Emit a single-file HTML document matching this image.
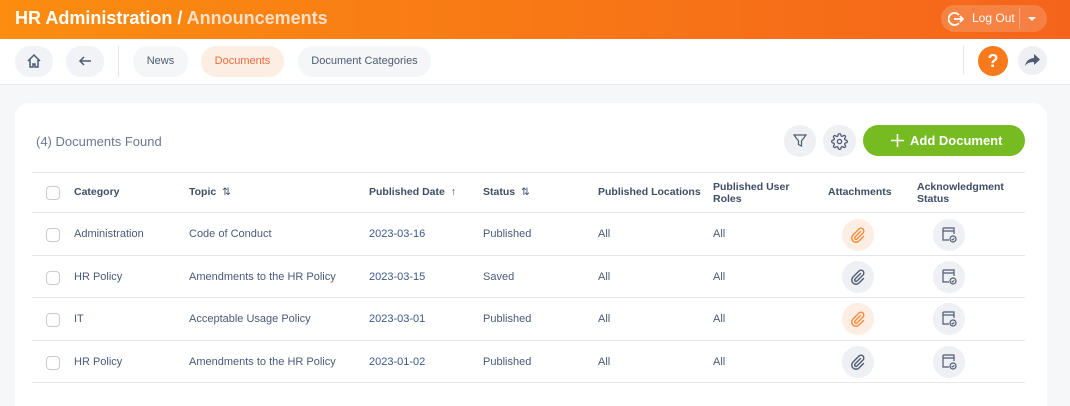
<!DOCTYPE html><html><head><style>
*{box-sizing:border-box;margin:0;padding:0}
html,body{width:1070px;height:406px;overflow:hidden}
body{background:#f6f7f9;font-family:"Liberation Sans",sans-serif;position:relative}
.hdr{position:absolute;left:0;top:0;width:1070px;height:39px;background:linear-gradient(90deg,#fb8d10,#f5641b)}
.hdr h1{position:absolute;left:15px;top:8px;font-size:18px;color:#fff;font-weight:bold}
.hdr h1 span{color:#fde0c8}
.lo{position:absolute;left:941px;top:5px;width:106px;height:27px;border-radius:14px;background:rgba(255,255,255,.18);color:#fff;font-size:12px}
.tb{position:absolute;left:0;top:39px;width:1070px;height:46px;background:#fff;border-bottom:1px solid #e8eaee}
.ib{position:absolute;width:38px;height:31px;border-radius:15px;background:#f1f3f6;top:7px}
.pill{position:absolute;top:7px;height:31px;border-radius:15px;background:#f4f6f8;font-size:11px;color:#4d5b73;line-height:31px;text-align:center}
.card{position:absolute;left:15px;top:103px;width:1032px;height:303px;background:#fff;border-radius:14px 14px 0 0}
.row{position:absolute;left:32px;width:993px;border-top:1px solid #e4e6ea;font-size:11px;color:#4a5a78}
.row div{position:absolute}
.cb{width:14px;height:14px;border:1px solid #c7ccd5;border-radius:4px;left:14px}
.circ{width:32px;height:32px;border-radius:16px;background:#eef0f3}
.th{font-weight:bold;color:#3f4d66;font-size:10.5px}
</style></head><body>
<div class="hdr"><h1>HR Administration / <span>Announcements</span></h1>
<div class="lo"><svg style="position:absolute;left:7px;top:6px" width="16" height="16" viewBox="0 0 16 16" fill="none" stroke="#fff" stroke-width="1.8"><path d="M11 4A6 6 0 1 0 11 12"/><path d="M6 8h9M12 5l3 3-3 3"/></svg><span style="position:absolute;left:31px;top:6px">Log Out</span><div style="position:absolute;left:78px;top:3px;width:1px;height:21px;background:rgba(255,255,255,.3)"></div><div style="position:absolute;left:87px;top:12px;border:4px solid transparent;border-top:4px solid #fff"></div></div></div>
<div class="tb">
<div class="ib" style="left:15px"><svg style="position:absolute;left:11px;top:7px" width="16" height="16" viewBox="0 0 16 16" fill="none" stroke="#4d5b73" stroke-width="1.5"><path d="M2 8L8 2l6 6M4 6.5V14h3v-3h2v3h3V6.5"/></svg></div>
<div class="ib" style="left:66px"><svg style="position:absolute;left:12px;top:8px" width="14" height="14" viewBox="0 0 14 14" fill="none" stroke="#4d5b73" stroke-width="1.5"><path d="M13 7H2M6 3L2 7l4 4"/></svg></div>
<div style="position:absolute;left:118px;top:7px;width:1px;height:31px;background:#e3e5e9"></div>
<div class="pill" style="left:133px;width:55px">News</div>
<div class="pill" style="left:201px;width:83px;background:#fdeee4;color:#f26a3a">Documents</div>
<div class="pill" style="left:298px;width:133px">Document Categories</div>
<div style="position:absolute;left:963px;top:7px;width:1px;height:28px;background:#e3e5e9"></div>
<div style="position:absolute;left:978px;top:7px;width:30px;height:30px;border-radius:15px;background:#f97a1d;color:#fff;font-weight:bold;font-size:18px;text-align:center;line-height:30px">?</div>
<div style="position:absolute;left:1018px;top:7px;width:29px;height:29px;border-radius:15px;background:#eef0f3"><svg style="position:absolute;left:7px;top:8px" width="15" height="13" viewBox="0 0 15 13"><path d="M9 0l6 5.5L9 11V8C5 8 2 9 0 12c1-5 4-7.5 9-8z" fill="#4d5b73"/></svg></div>
</div>
<div class="card"></div>
<div style="position:absolute;left:36px;top:134px;font-size:13px;color:#6b7890">(4) Documents Found</div>
<div style="position:absolute;left:784px;top:125px;width:32px;height:32px;border-radius:16px;background:#eef0f3"><svg style="position:absolute;left:9px;top:9px" width="14" height="14" viewBox="0 0 14 14" fill="none" stroke="#4d5b73" stroke-width="1.2"><path d="M1 1h12L8.5 7v5l-3-1.5V7z"/></svg></div>
<div style="position:absolute;left:823px;top:125px;width:33px;height:32px;border-radius:16px;background:#eef0f3"><svg style="position:absolute;left:8px;top:8px" width="17" height="17" viewBox="0 0 24 24" fill="none" stroke="#4d5b73" stroke-width="1.8"><circle cx="12" cy="12" r="3"/><path d="M19.4 15a1.7 1.7 0 0 0 .3 1.8l.1.1a2 2 0 1 1-2.8 2.8l-.1-.1a1.7 1.7 0 0 0-1.8-.3 1.7 1.7 0 0 0-1 1.5V21a2 2 0 1 1-4 0v-.1a1.7 1.7 0 0 0-1.1-1.5 1.7 1.7 0 0 0-1.8.3l-.1.1a2 2 0 1 1-2.8-2.8l.1-.1a1.7 1.7 0 0 0 .3-1.8 1.7 1.7 0 0 0-1.5-1H3a2 2 0 1 1 0-4h.1a1.7 1.7 0 0 0 1.5-1.1 1.7 1.7 0 0 0-.3-1.8l-.1-.1a2 2 0 1 1 2.8-2.8l.1.1a1.7 1.7 0 0 0 1.8.3H9a1.7 1.7 0 0 0 1-1.5V3a2 2 0 1 1 4 0v.1a1.7 1.7 0 0 0 1 1.5 1.7 1.7 0 0 0 1.8-.3l.1-.1a2 2 0 1 1 2.8 2.8l-.1.1a1.7 1.7 0 0 0-.3 1.8V9a1.7 1.7 0 0 0 1.5 1H21a2 2 0 1 1 0 4h-.1a1.7 1.7 0 0 0-1.5 1z"/></svg></div>
<div style="position:absolute;left:863px;top:125px;width:162px;height:31px;border-radius:16px;background:#76bb22;color:#fff;font-size:13px;font-weight:bold;line-height:31px"><svg style="position:absolute;left:28px;top:9px" width="13" height="13" viewBox="0 0 13 13" stroke="#fff" stroke-width="1.6"><path d="M6.5 0v13M0 6.5h13"/></svg><span style="position:absolute;left:47px">Add Document</span></div>

<div class="row" style="top:172px;height:40px"><div class="cb" style="top:13px"></div>
<div class="th" style="left:42px;top:13px">Category</div><div class="th" style="left:157px;top:13px">Topic &nbsp;<span style="font-weight:normal">⇅</span></div>
<div class="th" style="left:337px;top:13px">Published Date &nbsp;<span>↑</span></div><div class="th" style="left:451px;top:13px">Status &nbsp;<span style="font-weight:normal">⇅</span></div>
<div class="th" style="left:566px;top:13px">Published Locations</div><div class="th" style="left:681px;top:8px;width:90px;line-height:12px">Published User Roles</div>
<div class="th" style="left:796px;top:13px">Attachments</div><div class="th" style="left:885px;top:8px;line-height:12px">Acknowledgment<br>Status</div></div>

<svg width="0" height="0" style="position:absolute"><defs><symbol id="clip" viewBox="0 0 16 16"><path d="M10.5 4.5L5 10a1.4 1.4 0 0 0 2 2l6-6a2.8 2.8 0 0 0-4-4L3 8a4.2 4.2 0 0 0 6 6l4.5-4.5" fill="none" stroke="currentColor" stroke-width="1.4" stroke-linecap="round"/></symbol><symbol id="ack" viewBox="0 0 15 16"><path d="M1 1h11v6M1 1v12h6M1 4h11" fill="none" stroke="#4d5b73" stroke-width="1.2"/><circle cx="11" cy="12" r="3" fill="none" stroke="#4d5b73" stroke-width="1.2"/><path d="M9.7 12l1 1 1.6-1.8" fill="none" stroke="#4d5b73" stroke-width="1"/></symbol></defs></svg>

<div class="row" style="top:212px;height:43px"><div class="cb" style="top:15px"></div><div style="left:42px;top:15px">Administration</div><div style="left:157px;top:15px">Code of Conduct</div><div style="left:337px;top:15px;color:#3b5789">2023-03-16</div><div style="left:451px;top:15px">Published</div><div style="left:566px;top:15px">All</div><div style="left:681px;top:15px">All</div><div class="circ" style="left:810px;top:6px;background:#fdeee4;color:#f58a3c"><svg style="position:absolute;left:8px;top:8px" width="16" height="16"><use href="#clip"/></svg></div><div class="circ" style="left:901px;top:6px"><svg style="position:absolute;left:9px;top:8px" width="15" height="16"><use href="#ack"/></svg></div></div>
<div class="row" style="top:255px;height:42px"><div class="cb" style="top:15px"></div><div style="left:42px;top:15px">HR Policy</div><div style="left:157px;top:15px">Amendments to the HR Policy</div><div style="left:337px;top:15px;color:#3b5789">2023-03-15</div><div style="left:451px;top:15px">Saved</div><div style="left:566px;top:15px">All</div><div style="left:681px;top:15px">All</div><div class="circ" style="left:810px;top:5px;color:#4d5b73"><svg style="position:absolute;left:8px;top:8px" width="16" height="16"><use href="#clip"/></svg></div><div class="circ" style="left:901px;top:5px"><svg style="position:absolute;left:9px;top:8px" width="15" height="16"><use href="#ack"/></svg></div></div>
<div class="row" style="top:297px;height:43px"><div class="cb" style="top:15px"></div><div style="left:42px;top:15px">IT</div><div style="left:157px;top:15px">Acceptable Usage Policy</div><div style="left:337px;top:15px;color:#3b5789">2023-03-01</div><div style="left:451px;top:15px">Published</div><div style="left:566px;top:15px">All</div><div style="left:681px;top:15px">All</div><div class="circ" style="left:810px;top:5px;background:#fdeee4;color:#f58a3c"><svg style="position:absolute;left:8px;top:8px" width="16" height="16"><use href="#clip"/></svg></div><div class="circ" style="left:901px;top:5px"><svg style="position:absolute;left:9px;top:8px" width="15" height="16"><use href="#ack"/></svg></div></div>
<div class="row" style="top:340px;height:43px;border-bottom:1px solid #e4e6ea"><div class="cb" style="top:15px"></div><div style="left:42px;top:15px">HR Policy</div><div style="left:157px;top:15px">Amendments to the HR Policy</div><div style="left:337px;top:15px;color:#3b5789">2023-01-02</div><div style="left:451px;top:15px">Published</div><div style="left:566px;top:15px">All</div><div style="left:681px;top:15px">All</div><div class="circ" style="left:810px;top:5px;color:#4d5b73"><svg style="position:absolute;left:8px;top:8px" width="16" height="16"><use href="#clip"/></svg></div><div class="circ" style="left:901px;top:5px"><svg style="position:absolute;left:9px;top:8px" width="15" height="16"><use href="#ack"/></svg></div></div>
</body></html>
